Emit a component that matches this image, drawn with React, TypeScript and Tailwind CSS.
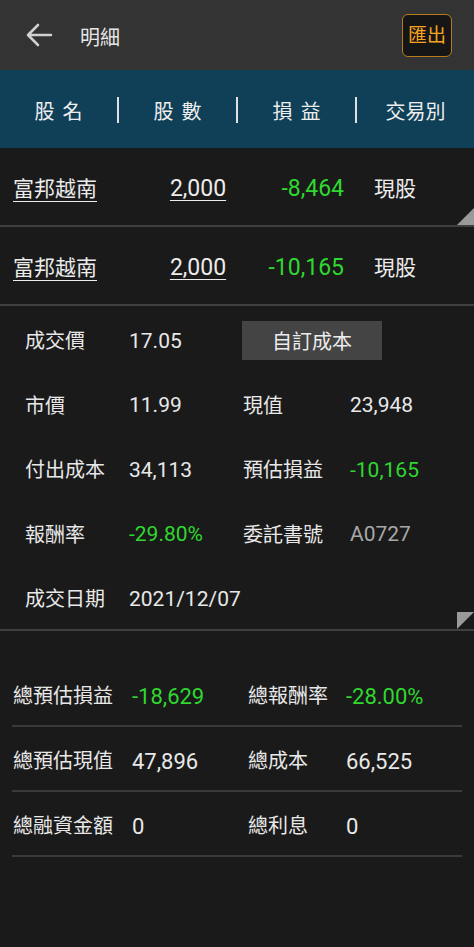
import React from "react";

const font = { fontFamily: "Roboto, 'Noto Sans CJK TC', sans-serif" };

const Row = ({ name, qty, pl, type, expanded }: { name: string; qty: string; pl: string; type: string; expanded?: boolean }) => (
  <div className="relative flex items-center h-[79px] pt-[6px] border-b-2 border-[#3f3f3f] text-[21px] text-[#ececec]">
    <span className="w-[150px] shrink-0 pl-[13px] underline underline-offset-[5px] decoration-1">{name}</span>
    <span className="w-[96px] shrink-0 text-center text-[23px] underline underline-offset-[4px] decoration-1">{qty}</span>
    <span className="w-[98px] shrink-0 text-right text-[23px] text-[#2fd82f]">{pl}</span>
    <span className="pl-[30px]">{type}</span>
    {!expanded && (
      <svg className="absolute right-0 bottom-0" width="17" height="17" viewBox="0 0 17 17">
        <polygon points="0,17 17,0 17,17" fill="#9a9a9a" />
      </svg>
    )}
  </div>
);

const Detail = ({ l1, v1, l2, v2, green1, green2, muted2 }: { l1: string; v1: string; l2?: string; v2?: React.ReactNode; green1?: boolean; green2?: boolean; muted2?: boolean }) => (
  <div className="flex items-center h-[64.5px] pt-[6px] text-[20px]">
    <span className="w-[129px] pl-[25px] text-[#e8e8e8] shrink-0 whitespace-nowrap">{l1}</span>
    <span className={"w-[114px] shrink-0 text-[21px] " + (green1 ? "text-[#2fd82f]" : "text-[#e8e8e8]")}>{v1}</span>
    {l2 && <span className="w-[107px] shrink-0 text-[#e8e8e8] whitespace-nowrap">{l2}</span>}
    {v2 && <span className={"text-[21px] " + (green2 ? "text-[#2fd82f]" : muted2 ? "text-[#a8a8a8]" : "text-[#e8e8e8]")}>{v2}</span>}
  </div>
);

const Sum = ({ l1, v1, l2, v2, green }: { l1: string; v1: string; l2: string; v2: string; green?: boolean }) => (
  <div className="flex items-center h-[65px] pt-[6px] mx-[12px] border-b-2 border-[#3a3a3a] text-[20px] text-[#e8e8e8]">
    <span className="w-[120px] pl-[1px] shrink-0 whitespace-nowrap">{l1}</span>
    <span className={"w-[116px] shrink-0 text-[22px] " + (green ? "text-[#2fd82f]" : "")}>{v1}</span>
    <span className="w-[98px] shrink-0 whitespace-nowrap">{l2}</span>
    <span className={"text-[22px] " + (green ? "text-[#2fd82f]" : "")}>{v2}</span>
  </div>
);

export default function App() {
  return (
    <div className="w-[474px] min-h-[947px] bg-[#1a1a1a]" style={font}>
      {/* header */}
      <div className="h-[70px] bg-[#333333] flex items-center">
        <svg className="ml-[26px]" width="27" height="24" viewBox="0 0 27 24" fill="none" stroke="#d0d0d0" strokeWidth="2.6" strokeLinecap="round" strokeLinejoin="round">
          <path d="M25 12H3M12 2L2 12l10 10" />
        </svg>
        <span className="ml-[27px] pt-[5px] text-[20px] text-[#e6e6e6]">明細</span>
        <div className="ml-auto mr-[22px] w-[50px] h-[43px] pt-[3px] rounded-[6px] border-[1.5px] border-[#b87a1c] bg-[#161616] flex items-center justify-center text-[19px] text-[#f5a320]">
          匯出
        </div>
      </div>
      {/* column header */}
      <div className="h-[78px] pt-[6px] bg-[#0f4058] flex items-center text-[20px] text-[#eeeeee]">
        {["股名", "股數", "損益", "交易別"].map((t, i) => (
          <React.Fragment key={t}>
            <div className={"flex-1 flex justify-center " + (t.length === 2 ? "gap-[8px]" : "")}>
              {t.length === 2 ? t.split("").map((c) => <span key={c}>{c}</span>) : <span>{t}</span>}
            </div>
            {i < 3 && <div className="w-[2px] h-[26px] mt-[-4px] bg-[#e0e0e0]" />}
          </React.Fragment>
        ))}
      </div>
      <Row name="富邦越南" qty="2,000" pl="-8,464" type="現股" />
      <Row name="富邦越南" qty="2,000" pl="-10,165" type="現股" expanded />
      {/* detail */}
      <div className="relative border-b-2 border-[#3f3f3f]">
        <div className="flex items-center h-[64.5px] pt-[6px] text-[20px]">
          <span className="w-[129px] pl-[25px] text-[#e8e8e8] shrink-0">成交價</span>
          <span className="w-[113px] shrink-0 text-[21px] text-[#e8e8e8]">17.05</span>
          <div className="w-[140px] h-[39px] pt-[4px] bg-[#444444] flex items-center justify-center text-[#ececec] mt-[-2px]">自訂成本</div>
        </div>
        <Detail l1="市價" v1="11.99" l2="現值" v2="23,948" />
        <Detail l1="付出成本" v1="34,113" l2="預估損益" v2="-10,165" green2 />
        <Detail l1="報酬率" v1="-29.80%" green1 l2="委託書號" v2="A0727" muted2 />
        <Detail l1="成交日期" v1="2021/12/07" />
        <svg className="absolute right-0 bottom-0" width="17" height="17" viewBox="0 0 17 17">
          <polygon points="0,0 17,0 0,17" fill="#9a9a9a" />
        </svg>
      </div>
      {/* summary */}
      <div className="pt-[31px]">
        <Sum l1="總預估損益" v1="-18,629" l2="總報酬率" v2="-28.00%" green />
        <Sum l1="總預估現值" v1="47,896" l2="總成本" v2="66,525" />
        <Sum l1="總融資金額" v1="0" l2="總利息" v2="0" />
      </div>
    </div>
  );
}
